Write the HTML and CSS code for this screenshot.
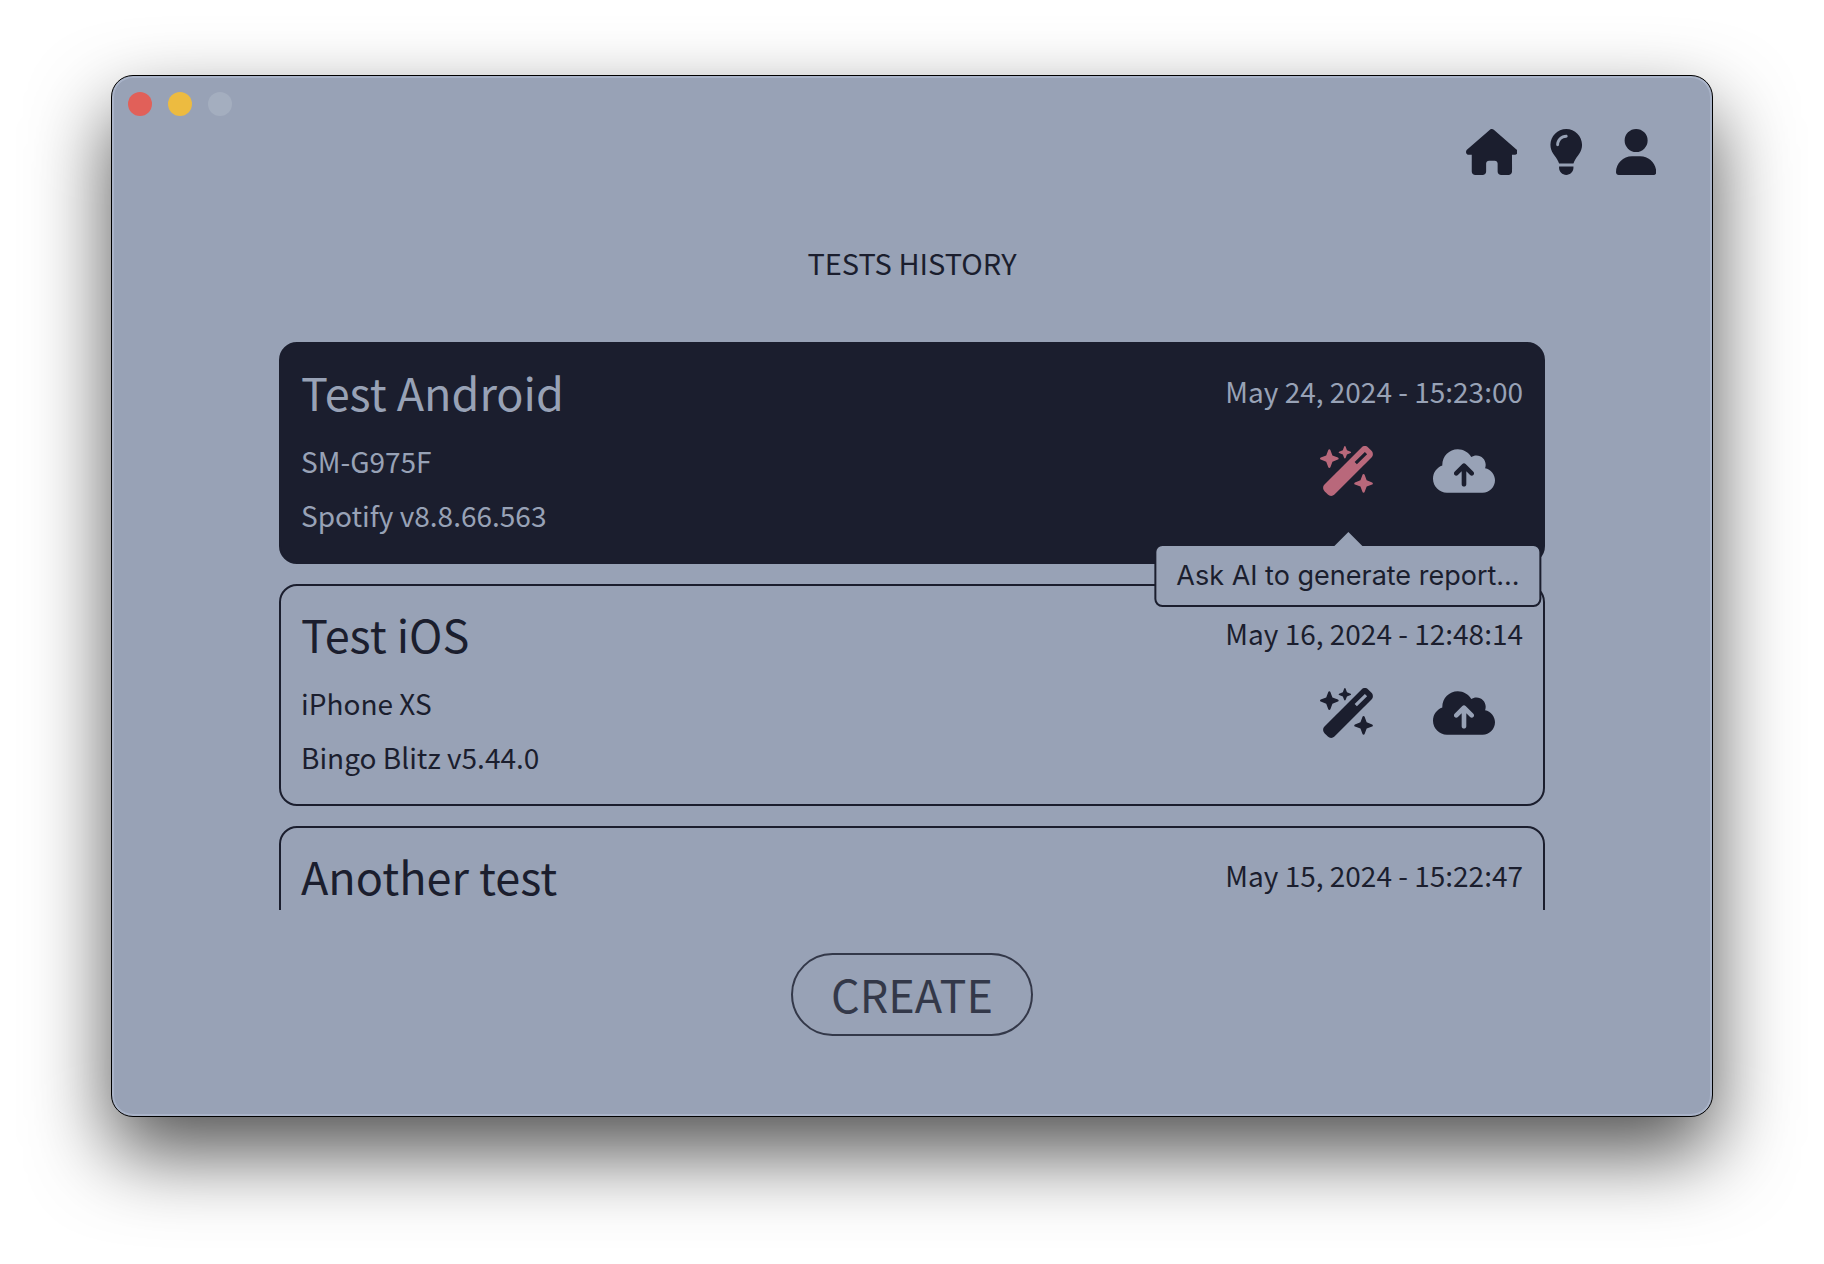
FILE: index.html
```html
<!DOCTYPE html>
<html lang="en">
<head>
    <meta charset="UTF-8">
    <meta name="viewport" content="width=device-width, initial-scale=1.0">
    <title>Tests History</title>
    <link rel="stylesheet" href="styles.css">
</head>
<body>

    <!-- Shared icons -->
    <svg class="sprite" aria-hidden="true">
        <symbol id="icon-wand" viewBox="0 0 576 512">
            <path d="M234.7 42.7L197 56.8c-3 1.1-5 4-5 7.2s2 6.1 5 7.2l37.7 14.1L248.8 123c1.1 3 4 5 7.2 5s6.1-2 7.2-5l14.1-37.7L315 71.2c3-1.1 5-4 5-7.2s-2-6.1-5-7.2L277.3 42.7 263.2 5c-1.1-3-4-5-7.2-5s-6.1 2-7.2 5L234.7 42.7zM46.1 395.4c-18.7 18.7-18.7 49.1 0 67.9l34.6 34.6c18.7 18.7 49.1 18.7 67.9 0L529.9 116.5c18.7-18.7 18.7-49.1 0-67.9L495.3 14.1c-18.7-18.7-49.1-18.7-67.9 0L46.1 395.4zM484.6 82.6l-105 105-23.3-23.3 105-105 23.3 23.3zM7.5 117.2C3 118.9 0 123.2 0 128s3 9.1 7.5 10.8L64 160l21.2 56.5c1.7 4.5 6 7.5 10.8 7.5s9.1-3 10.8-7.5L128 160l56.5-21.2c4.5-1.7 7.5-6 7.5-10.8s-3-9.1-7.5-10.8L128 96 106.8 39.5C105.1 35 100.8 32 96 32s-9.1 3-10.8 7.5L64 96 7.5 117.2zm352 256c-4.5 1.7-7.5 6-7.5 10.8s3 9.1 7.5 10.8L416 416l21.2 56.5c1.7 4.5 6 7.5 10.8 7.5s9.1-3 10.8-7.5L480 416l56.5-21.2c4.5-1.7 7.5-6 7.5-10.8s-3-9.1-7.5-10.8L480 352l-21.2-56.5c-1.7-4.5-6-7.5-10.8-7.5s-9.1 3-10.8 7.5L416 352l-56.5 21.2z"/>
        </symbol>
        <symbol id="icon-upload" viewBox="0 0 640 512">
            <path d="M144 480C64.5 480 0 415.5 0 336c0-62.8 40.2-116.2 96.2-135.9c-.1-2.7-.2-5.4-.2-8.1c0-88.4 71.6-160 160-160c59.3 0 111 32.2 138.7 80.2C409.9 102 428.3 96 448 96c53 0 96 43 96 96c0 12.2-2.3 23.8-6.4 34.6C596 238.4 640 290.1 640 352c0 70.7-57.3 128-128 128H144zm79-217c-9.4 9.4-9.4 24.6 0 33.9s24.6 9.4 33.9 0l39-39V392c0 13.3 10.7 24 24 24s24-10.7 24-24V257.9l39 39c9.4 9.4 24.6 9.4 33.9 0s9.4-24.6 0-33.9l-80-80c-9.4-9.4-24.6-9.4-33.9 0l-80 80z"/>
        </symbol>
    </svg>

    <div class="window">
        <div class="titlebar">
            <button class="light close" aria-label="Close"></button>
            <button class="light minimize" aria-label="Minimize"></button>
            <button class="light zoom" aria-label="Zoom" disabled></button>
        </div>

        <nav class="menu">
            <a href="#" aria-label="Home">
                <svg viewBox="0 0 576 512"><path d="M575.8 255.5c0 18-15 32.1-32 32.1h-32l.7 160.2c0 2.7-.2 5.4-.5 8.1V472c0 22.1-17.9 40-40 40H456c-1.1 0-2.2 0-3.3-.1c-1.4 .1-2.8 .1-4.2 .1H416 392c-22.1 0-40-17.9-40-40V448 384c0-17.7-14.3-32-32-32H256c-17.7 0-32 14.3-32 32v64 24c0 22.1-17.9 40-40 40H160 128.1c-1.5 0-3-.1-4.5-.2c-1.2 .1-2.4 .2-3.6 .2H104c-22.1 0-40-17.9-40-40V360c0-.9 0-1.9 .1-2.8V287.6H32c-18 0-32-14-32-32.1c0-9 3-17 10-24L266.4 8c7-7 15-8 22-8s15 2 21 7L564.8 231.5c8 7 12 15 11 24z"/></svg>
            </a>
            <a href="#" aria-label="Tips">
                <svg viewBox="0 0 384 512"><path d="M272 384c9.6-31.9 29.5-59.1 49.2-86.2l0 0c5.2-7.1 10.4-14.2 15.4-21.4c19.8-28.5 31.4-63 31.4-100.3C368 78.8 289.2 0 192 0S16 78.8 16 176c0 37.3 11.6 71.9 31.4 100.3c5 7.2 10.2 14.3 15.4 21.4l0 0c19.8 27.1 39.7 54.4 49.2 86.2H272zM192 512c44.2 0 80-35.8 80-80V416H112v16c0 44.2 35.8 80 80 80zM112 176c0 8.8-7.2 16-16 16s-16-7.2-16-16c0-61.9 50.1-112 112-112c8.8 0 16 7.2 16 16s-7.2 16-16 16c-44.2 0-80 35.8-80 80z"/></svg>
            </a>
            <a href="#" aria-label="Account">
                <svg viewBox="0 0 448 512"><path d="M224 256A128 128 0 1 0 224 0a128 128 0 1 0 0 256zm-45.7 48C79.8 304 0 383.8 0 482.3C0 498.7 13.3 512 29.7 512H418.3c16.4 0 29.7-13.3 29.7-29.7C448 383.8 368.2 304 269.7 304H178.3z"/></svg>
            </a>
        </nav>

        <h1>TESTS HISTORY</h1>

        <main class="test-list">
            <article class="test-card active">
                <div class="test-info">
                    <h2>Test Android</h2>
                    <p>SM-G975F</p>
                    <p>Spotify v8.8.66.563</p>
                </div>
                <div class="test-side">
                    <time datetime="2024-05-24T15:23:00">May 24, 2024 - 15:23:00</time>
                    <div class="actions">
                        <button class="icon-button highlighted" aria-labelledby="ai-tooltip">
                            <svg class="wand"><use href="#icon-wand"/></svg>
                            <span class="tooltip" id="ai-tooltip">Ask AI to generate report...</span>
                        </button>
                        <button class="icon-button" aria-label="Upload">
                            <svg class="upload"><use href="#icon-upload"/></svg>
                        </button>
                    </div>
                </div>
            </article>

            <article class="test-card">
                <div class="test-info">
                    <h2>Test iOS</h2>
                    <p>iPhone XS</p>
                    <p>Bingo Blitz v5.44.0</p>
                </div>
                <div class="test-side">
                    <time datetime="2024-05-16T12:48:14">May 16, 2024 - 12:48:14</time>
                    <div class="actions">
                        <button class="icon-button" aria-label="Generate report">
                            <svg class="wand"><use href="#icon-wand"/></svg>
                        </button>
                        <button class="icon-button" aria-label="Upload">
                            <svg class="upload"><use href="#icon-upload"/></svg>
                        </button>
                    </div>
                </div>
            </article>

            <article class="test-card">
                <div class="test-info">
                    <h2>Another test</h2>
                </div>
                <div class="test-side">
                    <time datetime="2024-05-15T15:22:47">May 15, 2024 - 15:22:47</time>
                </div>
            </article>
        </main>

        <button class="create">CREATE</button>
    </div>

</body>
</html>
```
FILE: styles.css
```css
:root {
    --base: #98a2b6;
    --dark: #1b1e2e;
    --pink: #b9687b;
}

* {
    box-sizing: border-box;
}

body {
    margin: 0;
    padding: 75px 111px 147px;
    height: 100vh;
    background-color: white;
    color: var(--dark);
    font-family: "Noto Sans CJK SC", "Noto Sans", sans-serif;
    font-size: 28px;
    line-height: 54px;
    overflow: hidden;
}

h1, h2, p {
    margin: 0;
    font-weight: normal;
}

button {
    padding: 0;
    border: none;
    background: none;
    color: inherit;
    font-family: inherit;
    cursor: pointer;
}

svg {
    display: block;
    fill: currentColor;
}

.sprite {
    display: none;
}

.window {
    display: flex;
    flex-direction: column;
    height: 100%;
    padding-bottom: 80px;
    border: 1px solid black;
    border-radius: 22px;
    background-color: var(--base);
    box-shadow: inset 0 0 0 2px #a9b3c8, 0 36px 80px rgba(0, 0, 0, 0.68);
}

.titlebar {
    display: flex;
    gap: 16px;
    padding: 16px 16px 13px;
}

.light {
    width: 24px;
    height: 24px;
    border-radius: 50%;
}

.close {
    background-color: #e16059;
}

.minimize {
    background-color: #edbb40;
}

.zoom {
    background-color: #a4aebf;
}

.menu {
    display: flex;
    justify-content: flex-end;
    gap: 32px;
    padding: 0 56px;
}

.menu a {
    color: inherit;
}

.menu svg {
    height: 46px;
}

h1 {
    margin: 60px 0 53px;
    font-size: 29px;
    text-align: center;
}

.test-list {
    display: flex;
    flex-direction: column;
    flex: 1;
    gap: 20px;
    min-height: 0;
    margin: 0 167px;
    overflow-y: auto;
    scrollbar-width: none;
}

.test-card {
    display: flex;
    flex-shrink: 0;
    justify-content: space-between;
    min-height: 222px;
    padding: 12px 20px 20px;
    border: 2px solid var(--dark);
    border-radius: 18px;
}

.active {
    background-color: var(--dark);
    color: var(--base);
}

.test-card h2 {
    margin-bottom: 6px;
    font-size: 45px;
    line-height: 72px;
}

.test-side {
    display: flex;
    flex-direction: column;
    gap: 28px;
    padding-top: 8px;
}

.actions {
    display: flex;
    justify-content: flex-end;
    gap: 57px;
    padding-right: 28px;
}

.icon-button {
    position: relative;
}

.highlighted {
    color: var(--pink);
}

.wand {
    width: 56px;
    height: 50px;
}

.upload {
    width: 62px;
    height: 50px;
}

.tooltip {
    position: absolute;
    top: 98px;
    left: 50%;
    z-index: 1;
    padding: 1px 20px 0;
    border: 2px solid var(--dark);
    border-radius: 8px;
    background-color: var(--base);
    color: var(--dark);
    font-family: Inter, sans-serif;
    font-size: 27px;
    line-height: 58px;
    white-space: nowrap;
    transform: translateX(-50%);
}

.tooltip::before {
    content: "";
    position: absolute;
    bottom: 100%;
    left: 50%;
    border: 14px solid transparent;
    border-top: none;
    border-bottom-color: var(--base);
    transform: translateX(-50%);
}

.create {
    align-self: center;
    margin-top: 43px;
    padding: 0 38px 2px;
    border: 2px solid var(--dark);
    border-radius: 42px;
    font-size: 45px;
    line-height: 77px;
    opacity: 0.8;
}
```
